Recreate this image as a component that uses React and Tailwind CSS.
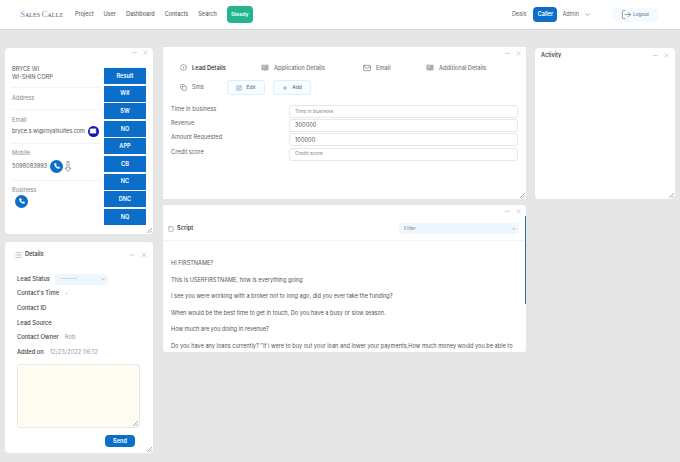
import { Minus, X, Phone, Mail, Info, SquarePen, Plus, Copy, LogOut, ChevronDown, List, Square } from "lucide-react";

const WinControls = ({ className = "" }) => (
    <div className={`flex items-center gap-[4px] text-gray-400 ${className}`}>
        <Minus size={7} strokeWidth={1.5} />
        <X size={7} strokeWidth={1.5} />
    </div>
);

const Grip = () => (
    <svg className="absolute right-[1px] bottom-[1px]" width="5" height="5" viewBox="0 0 5 5">
        <path d="M5 0L0 5M5 2.5L2.5 5" stroke="#888" strokeWidth="0.7" />
    </svg>
);

const CallBtn = ({ className = "" }) => (
    <span className={`flex items-center justify-center w-[13px] h-[13px] rounded-full bg-[#0b6fc9] ${className}`}>
        <Phone size={6} fill="white" color="white" />
    </span>
);

const DocIcon = () => (
    <svg width="8" height="8" viewBox="0 0 8 8">
        <path d="M0.5 0.8H7.5V6.2H4.8L4 7.4L3.2 6.2H0.5Z" fill="#a8adb3" />
        <path d="M2 2.2H4.5M2 3.8H3.5" stroke="#e8eaec" strokeWidth="0.7" />
    </svg>
);

const results = ["Result", "W#", "SW", "NO", "APP", "CB", "NC", "DNC", "NQ"];

const LeadCard = () => (
    <div className="relative h-[186px] bg-white rounded-[4px] pt-[2px] px-[7px]">
        <WinControls className="justify-end -mr-[3px] h-[8px] mt-[-2px] pt-[1px]" />
        <div className="flex gap-[4px] mt-[12px]">
            <div className="w-[88px] -mt-[3px] text-[5.7px] text-[#555]">
                <div className="leading-[8px] pb-[6px] border-b border-gray-100">
                    <p>BRYCE WI</p>
                    <p>WI-SHIN CORP</p>
                </div>
                <div className="h-[22px] pt-[6px] border-b border-gray-100 text-[#888]">Address</div>
                <div className="h-[34px] pt-[6px] border-b border-gray-100">
                    <p className="text-[#888]">Email</p>
                    <div className="flex items-center mt-[1px] whitespace-nowrap">
                        <span className="text-[5.5px]">bryce.s.wi@royalsuites.com</span>
                        <span className="ml-[3px] flex items-center justify-center w-[11px] h-[11px] rounded-full bg-[#1414b4] shrink-0">
                            <Mail size={8} fill="white" color="#1414b4" strokeWidth={1.5} />
                        </span>
                    </div>
                </div>
                <div className="h-[37px] pt-[5px] border-b border-gray-100">
                    <p className="text-[#888]">Mobile</p>
                    <div className="flex items-center mt-[2px]">
                        <span>5098083993</span>
                        <CallBtn className="ml-[3px]" />
                        <svg className="ml-[1px]" width="8" height="11" viewBox="0 0 8 11" fill="none" stroke="#666" strokeWidth="0.6">
                            <path d="M3 0.5H5V7H7L4 10.5L1 7H3Z" />
                        </svg>
                    </div>
                </div>
                <div className="pt-[5px]">
                    <p className="text-[#888]">Business</p>
                    <CallBtn className="ml-[3px]" />
                </div>
            </div>
            <div className="w-[42px] flex flex-col gap-[1.6px]">
                {results.map((r) => (
                    <button key={r} className="h-[16px] bg-[#0b6fc9] text-white text-[5.6px] font-semibold">{r}</button>
                ))}
            </div>
        </div>
        <Grip />
    </div>
);

const detailRows = [
    ["Contact's Time", "-"],
    ["Contact ID", ""],
    ["Lead Source", ""],
    ["Contact Owner", "Rob"],
    ["Added on", "12/23/2022 06:12"],
];

const DetailsCard = () => (
    <div className="relative h-[211px] bg-white rounded-[4px] px-[12px]">
        <div className="flex items-center h-[24px] pt-[1px] -ml-[3px]">
            <List size={8} className="text-gray-400" />
            <span className="ml-[3px] text-[5.6px] font-semibold text-[#444]">Details</span>
            <div className="ml-auto flex items-center gap-[4px] text-gray-400 -mr-[7px]">
                <Minus size={8} strokeWidth={1.5} />
                <X size={8} strokeWidth={1.5} />
            </div>
        </div>
        <div className="text-[5.8px] mt-[6px]">
            <div className="flex items-center h-[14px]">
                <span className="w-[38px] font-medium text-[#444]">Lead Status</span>
                <div className="flex items-center justify-between w-[53px] h-[11px] bg-[#eff7fe] rounded-[3px] px-[6px] pr-[2px] text-[#888]">
                    <span className="text-[5px]">-------</span>
                    <ChevronDown size={6} />
                </div>
            </div>
            {detailRows.map(([k, v]) => (
                <div key={k} className="flex items-center h-[14.8px] whitespace-nowrap">
                    <span className="font-medium text-[#444]">{k}</span>
                    <span className="ml-[6px] text-[#999]">{v}</span>
                </div>
            ))}
        </div>
        <div className="relative mt-[4.5px] h-[64px] w-[123px] bg-[#fffcf2] border border-gray-200 rounded-[3px]">
            <Grip />
        </div>
        <div className="flex justify-end mt-[7px] pr-[6px]">
            <button className="w-[30px] h-[12px] rounded-[4px] bg-[#0b6fc9] text-white text-[5.6px] font-semibold">Send</button>
        </div>
        <Grip />
    </div>
);

const Tab = ({ icon, label, active, className = "" }) => (
    <div className={`flex items-center ${className}`}>
        {icon}
        <span className={`ml-[5px] text-[5.7px] ${active ? "font-semibold text-[#444]" : "font-medium text-[#777]"}`}>{label}</span>
    </div>
);

const fields = [
    ["Time in business", "Time in business", true],
    ["Revenue", "300000", false],
    ["Amount Requested", "100000", false],
    ["Credit score", "Credit score", true],
];

const LeadDetails = () => (
    <div className="relative h-[152px] bg-white px-[8px]">
        <WinControls className="justify-end pt-[3px] -mr-[4px] h-[10px]" />
        <div className="flex items-center h-[10px] mt-[6px] pl-[9px]">
            <Tab className="w-[81px]" active label="Lead Details" icon={<Info size={7} className="text-gray-500" />} />
            <Tab className="w-[102px]" label="Application Details" icon={<DocIcon />} />
            <Tab className="w-[63px]" label="Email" icon={<Mail size={8} className="text-gray-500" />} />
            <Tab label="Additional Details" icon={<DocIcon />} />
        </div>
        <div className="flex items-center mt-[7px] pl-[9px]">
            <Tab className="w-[47px]" label="Sms" icon={<Copy size={7} className="text-gray-500" />} />
            <button className="flex items-center justify-center gap-[4px] w-[38px] h-[15px] border border-[#dfeefb] rounded-[3px] bg-[#fafdff] text-[5px] font-medium text-[#4a78a8]">
                <SquarePen size={6} /> Edit
            </button>
            <button className="ml-[8px] flex items-center justify-center gap-[4px] w-[38px] h-[15px] border border-[#dfeefb] rounded-[3px] bg-[#fafdff] text-[5px] font-medium text-[#4a78a8]">
                <Plus size={6} /> Add
            </button>
        </div>
        <div className="mt-[10px] flex flex-col gap-[1.2px]">
            {fields.map(([label, value, ph]) => (
                <div key={label} className="flex items-start h-[13px]">
                    <span className="w-[118px] text-[5.7px] leading-[8px] text-[#666]">{label}</span>
                    <div className={`w-[229px] h-[13px] border border-gray-200 rounded-[3px] pl-[5px] flex items-center ${ph ? "text-[4.8px] text-[#888]" : "text-[5.7px] text-[#555]"}`}>{value}</div>
                </div>
            ))}
        </div>
        <Grip />
    </div>
);

const script = [
    "HI FIRSTNAME?",
    "This is USERFIRSTNAME, how is everything going",
    "I see you were working with a broker not to long ago, did you ever take the funding?",
    "When would be the best time to get in touch, Do you have a busy or slow season.",
    "How much are you doing in revenue?",
    "Do you have any loans currently? \"If i were to buy out your loan and lower your payments,How much money would you be able to",
];

const ScriptCard = () => (
    <div className="relative h-[147px] bg-white rounded-[3px] overflow-hidden">
        <WinControls className="justify-end pt-[3px] pr-[4px] h-[10px]" />
        <div className="flex items-center h-[25px] mt-[1px] pt-[1px] px-[5px] border-b border-gray-100">
            <Square size={6} className="text-gray-500" />
            <span className="ml-[3px] text-[5.6px] font-semibold text-[#444]">Script</span>
            <div className="ml-auto mr-[2px] flex items-center justify-between w-[120px] h-[11px] bg-[#eff7fe] rounded-[3px] pl-[5px] pr-[2px] text-[#888]">
                <span className="text-[5px]">Filter</span>
                <ChevronDown size={6} />
            </div>
        </div>
        <div className="pl-[8px] pt-[19px] flex flex-col gap-[9.3px]">
            {script.map((s) => (
                <p key={s} className="text-[5.6px] leading-[7.3px] text-[#555] whitespace-nowrap">{s}</p>
            ))}
        </div>
        <div className="absolute right-0 top-[11px] w-[1px] h-[88px] bg-[#2a6f9e]" />
    </div>
);

const ActivityCard = () => (
    <div className="relative w-[140px] h-[151px] bg-white rounded-[4px] px-[6px] pt-[3px]">
        <div className="flex items-center justify-between">
            <span className="text-[5.6px] font-medium text-[#333]">Activity</span>
            <WinControls className="-mr-[1px]" />
        </div>
        <Grip />
    </div>
);

const App = () => {
    return (
        <div className="w-[680px] h-[462px] overflow-hidden bg-[#e6e6e6] font-['Inter',sans-serif]">
            <header className="flex items-center h-[30px] bg-white border-b border-gray-300 text-[5.5px] text-[#666]">
                <span className="ml-[20px] font-['Liberation_Serif',serif] text-[6px] text-[#4a5568] w-[55px] whitespace-nowrap">
                    <span className="text-[9px] text-[#7f9cc4]">S</span>ALES <span className="text-[9px] text-[#7f9cc4]">C</span>ALLZ
                </span>
                <nav className="flex items-center font-medium">
                    <span>Project</span>
                    <span className="ml-[10px]">User</span>
                    <span className="ml-[10px]">Dashboard</span>
                    <span className="ml-[10px]">Contacts</span>
                    <span className="ml-[10px]">Search</span>
                    <button className="ml-[10px] w-[26px] h-[17px] rounded-[4px] bg-[#23b58f] text-white font-semibold text-[5.2px]">Steady</button>
                </nav>
                <div className="ml-auto flex items-center">
                    <span>Deals</span>
                    <button className="ml-[7px] w-[24px] h-[15px] rounded-[4px] bg-[#0b6fc9] text-white font-semibold">Caller</button>
                    <span className="ml-[5px]">Admin</span>
                    <ChevronDown size={7} className="ml-[5px]" />
                    <div className="ml-[21px] mr-[22px] flex items-center justify-center gap-[1px] w-[46px] h-[14px] rounded-[4px] bg-[#f5faff] text-[#5b86b5] font-medium text-[4.8px]">
                        <LogOut size={11} className="text-[#555]" strokeWidth={1.2} />
                        Logout
                    </div>
                </div>
            </header>
            <main className="flex items-start pt-[17px] pl-[5px]">
                <div className="w-[148px] flex flex-col gap-[8px] pt-[1px]">
                    <LeadCard />
                    <DetailsCard />
                </div>
                <div className="w-[363px] ml-[10px] flex flex-col gap-[6px]">
                    <LeadDetails />
                    <ScriptCard />
                </div>
                <div className="ml-[9px] pt-[1px]">
                    <ActivityCard />
                </div>
            </main>
        </div>
    );
};

export default App;
